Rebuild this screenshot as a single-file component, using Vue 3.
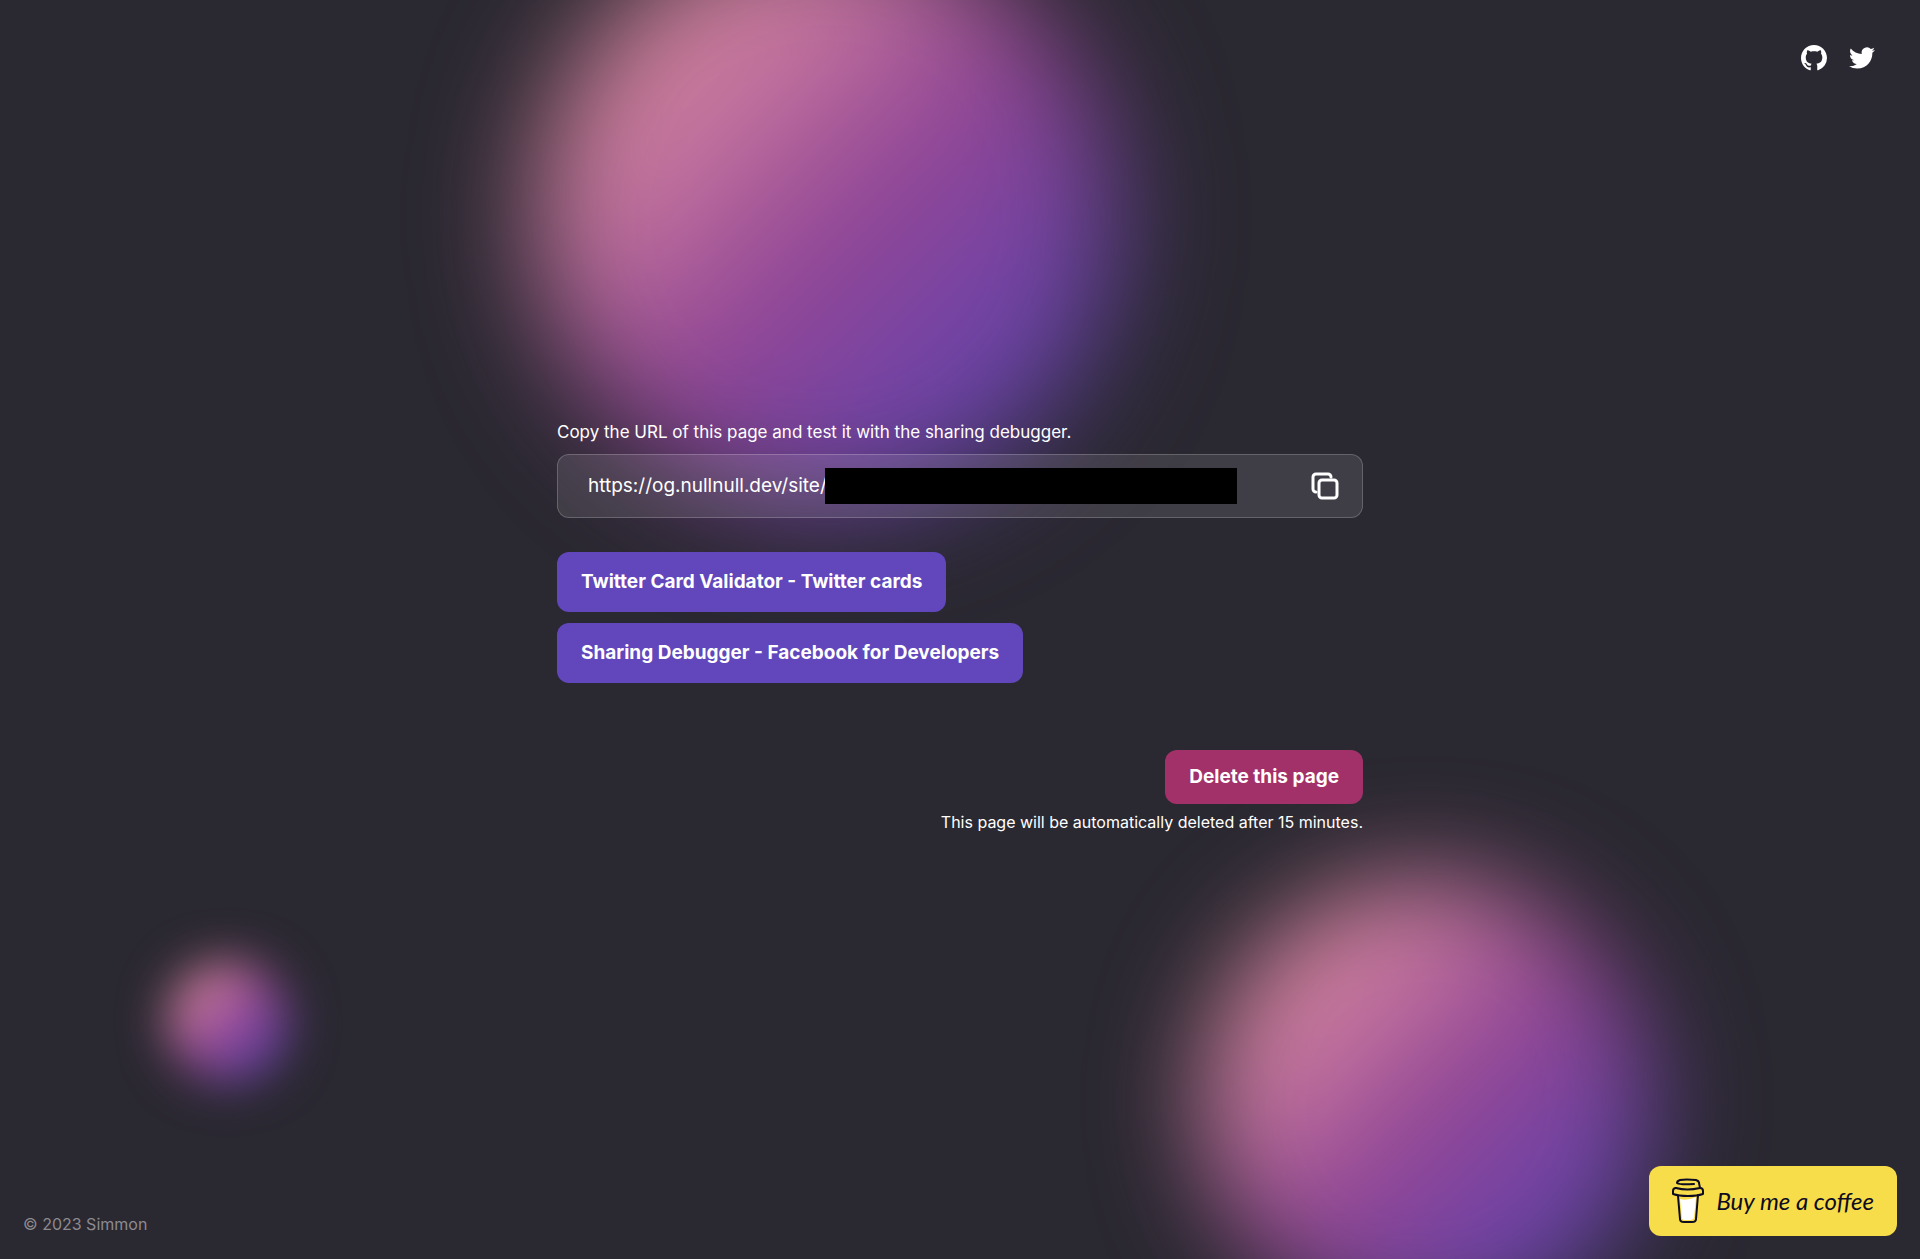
<script setup>
import { ref } from 'vue'

const url = ref('https://og.nullnull.dev/site/')
const debuggers = [
  { label: 'Twitter Card Validator - Twitter cards', href: '#twitter' },
  { label: 'Sharing Debugger - Facebook for Developers', href: '#facebook' },
]

function copyUrl() {
  navigator.clipboard?.writeText(url.value)
}
</script>

<template>
  <div class="page">
    <div class="blob blob-large"></div>
    <div class="blob blob-medium"></div>
    <div class="blob blob-small"></div>

    <header class="header">
      <a href="#github" aria-label="GitHub">
        <svg width="26" height="26" viewBox="0 0 16 16" fill="currentColor">
          <path d="M8 0C3.58 0 0 3.58 0 8c0 3.54 2.29 6.53 5.47 7.59.4.07.55-.17.55-.38 0-.19-.01-.82-.01-1.49-2.01.37-2.53-.49-2.69-.94-.09-.23-.48-.94-.82-1.13-.28-.15-.68-.52-.01-.53.63-.01 1.08.58 1.23.82.72 1.21 1.87.87 2.33.66.07-.52.28-.87.51-1.07-1.78-.2-3.64-.89-3.64-3.95 0-.87.31-1.59.82-2.15-.08-.2-.36-1.02.08-2.12 0 0 .67-.21 2.2.82.64-.18 1.32-.27 2-.27s1.36.09 2 .27c1.53-1.04 2.2-.82 2.2-.82.44 1.1.16 1.92.08 2.12.51.56.82 1.27.82 2.15 0 3.07-1.87 3.75-3.65 3.95.29.25.54.73.54 1.48 0 1.07-.01 1.93-.01 2.2 0 .21.15.46.55.38A8.01 8.01 0 0 0 16 8c0-4.42-3.58-8-8-8z" />
        </svg>
      </a>
      <a href="#twitter-profile" aria-label="Twitter">
        <svg width="26" height="26" viewBox="0 0 24 24" fill="currentColor">
          <path d="M23.953 4.57a10 10 0 0 1-2.825.775 4.958 4.958 0 0 0 2.163-2.723c-.951.555-2.005.959-3.127 1.184a4.92 4.92 0 0 0-8.384 4.482C7.69 8.095 4.067 6.13 1.64 3.162a4.822 4.822 0 0 0-.666 2.475c0 1.71.87 3.213 2.188 4.096a4.904 4.904 0 0 1-2.228-.616v.06a4.923 4.923 0 0 0 3.946 4.827 4.996 4.996 0 0 1-2.212.085 4.936 4.936 0 0 0 4.604 3.417 9.867 9.867 0 0 1-6.102 2.105c-.39 0-.779-.023-1.17-.067a13.995 13.995 0 0 0 7.557 2.209c9.053 0 13.998-7.496 13.998-13.985 0-.21 0-.42-.015-.63A9.935 9.935 0 0 0 24 4.59z" />
        </svg>
      </a>
    </header>

    <main class="content">
      <label class="caption" for="page-url">Copy the URL of this page and test it with the sharing debugger.</label>
      <div class="url-box">
        <input id="page-url" class="url" type="text" :value="url" readonly />
        <span class="redacted"></span>
        <button class="copy" type="button" aria-label="Copy URL" @click="copyUrl">
          <svg width="28" height="28" viewBox="0 0 28 28" fill="none" stroke="currentColor" stroke-width="3" stroke-linejoin="round" stroke-linecap="round">
            <rect x="8" y="8" width="18" height="18" rx="3" />
            <path d="M5 20A3 3 0 0 1 2 17V5a3 3 0 0 1 3-3h12a3 3 0 0 1 3 3" />
          </svg>
        </button>
      </div>

      <nav class="debuggers">
        <a v-for="item in debuggers" :key="item.href" class="button" :href="item.href">{{ item.label }}</a>
      </nav>

      <section class="removal">
        <button class="button button-danger" type="button">Delete this page</button>
        <p class="note">This page will be automatically deleted after 15 minutes.</p>
      </section>
    </main>

    <footer class="footer">
      <small class="copyright">© 2023 Simmon</small>
      <a class="coffee" href="#coffee">
        <svg width="32" height="46" viewBox="0 0 32 46" fill="none" stroke="#0d0c22" stroke-width="2" stroke-linejoin="round" stroke-linecap="round">
          <path d="M8 21 Q15 23 24 19 L22 40 Q21 42 18 42 H13 Q10 42 10 40Z" fill="#fff" stroke="none" />
          <path d="M6 18l2 23q0 3 4 3h8q4 0 4-3l2-24" />
          <path d="M4 10q-3 0-3 3v3q6 2 15 2t15-2v-3q0-3-3-3" />
          <path d="M4 10q11 3 24 0l-1-5q0-2-3-3Q14 1 8 2q-3 1-3 3 3 2 17 1" />
        </svg>
        <span>Buy me a coffee</span>
      </a>
    </footer>
  </div>
</template>

<style>
body {
  margin: 0;
  background: #2a2831;
}
</style>

<style scoped>
.page {
  position: relative;
  display: grid;
  grid-template-rows: 1fr auto 1fr;
  min-height: 100vh;
  overflow: hidden;
  background: #2a2831;
  color: #fff;
  font-family: Inter, "Liberation Sans", sans-serif;
}

.blob {
  position: absolute;
  border-radius: 50%;
  background: linear-gradient(135deg, #d4869a 15%, #c9789f 30%, #914594 52%, #6a44ab 78%, #5a3fa5 100%);
}

.blob-large {
  top: -74px;
  left: 43%;
  width: 580px;
  height: 580px;
  margin-left: -290px;
  filter: blur(58px);
}

.blob-medium {
  right: 268px;
  bottom: -68px;
  width: 450px;
  height: 450px;
  filter: blur(52px);
}

.blob-small {
  bottom: 177px;
  left: 168px;
  width: 120px;
  height: 120px;
  filter: blur(24px);
}

.header,
.content,
.footer {
  position: relative;
}

.header {
  display: flex;
  align-items: flex-start;
  justify-content: flex-end;
  gap: 22px;
  padding: 45px 45px 0;
}

.header a {
  display: flex;
  color: #fff;
}

.content {
  box-sizing: border-box;
  width: 100%;
  max-width: 846px;
  margin: 0 auto;
  padding: 0 20px 5px;
}

.caption,
.note {
  display: block;
  margin: 0;
  font-size: 17px;
  line-height: 22px;
}

.note {
  font-size: 16px;
}

.url-box {
  display: flex;
  align-items: center;
  box-sizing: border-box;
  height: 64px;
  margin-top: 11px;
  padding: 0 20px 0 30px;
  border: 1px solid rgba(255, 255, 255, 0.2);
  border-radius: 12px;
  background: rgba(255, 255, 255, 0.1);
}

.url {
  width: 237px;
  padding: 0;
  border: 0;
  outline: 0;
  background: none;
  color: #fff;
  font: 19px/24px Inter, "Liberation Sans", sans-serif;
}

.redacted {
  flex: 0 1 412px;
  height: 36px;
  background: #000;
}

.copy {
  display: flex;
  margin-left: auto;
  padding: 3px;
  border: 0;
  background: none;
  color: #fff;
  cursor: pointer;
}

.debuggers {
  display: flex;
  flex-direction: column;
  align-items: flex-start;
  gap: 11px;
  margin-top: 34px;
}

.button {
  padding: 18px 24px;
  border: 0;
  border-radius: 12px;
  background: #6147bb;
  color: #fff;
  font: 700 19px/24px Inter, "Liberation Sans", sans-serif;
  text-decoration: none;
}

.button-danger {
  padding: 15px 24px;
  background: #a33169;
  cursor: pointer;
}

.removal {
  display: flex;
  flex-direction: column;
  align-items: flex-end;
  gap: 7px;
  margin-top: 67px;
}

.footer {
  display: flex;
  align-items: flex-end;
  justify-content: space-between;
  padding: 0 23px 23px;
}

.copyright {
  color: #8c8b90;
  font-size: 16px;
  line-height: 24px;
}

.coffee {
  display: flex;
  align-items: center;
  gap: 12px;
  box-sizing: border-box;
  height: 70px;
  padding: 0 23px;
  border-radius: 12px;
  background: #f8dd4a;
  color: #0d0c22;
  font: italic 24px/28px Lato, sans-serif;
  text-decoration: none;
}
</style>
